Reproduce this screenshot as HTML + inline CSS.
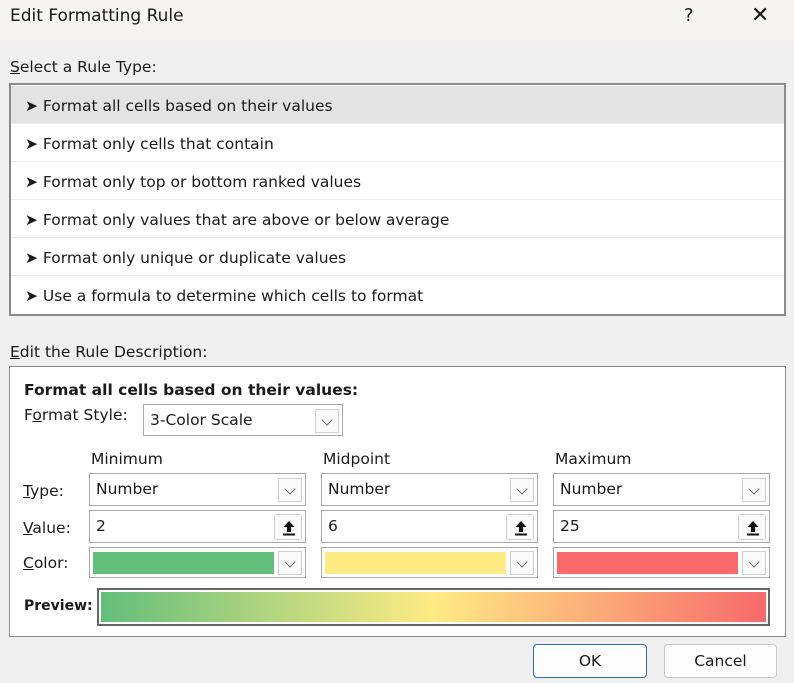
<!DOCTYPE html><html><head><style>
*{box-sizing:border-box;margin:0;padding:0}
body{width:794px;height:683px;background:#f0f0f0;font-family:"Segoe UI","DejaVu Sans","Liberation Sans",sans-serif;font-size:15.5px;color:#1a1a1a;position:relative;overflow:hidden}
.a{position:absolute;white-space:nowrap}
.title{left:0;top:0;width:794px;height:40px;background:#f6f4f1}
.list{left:9px;top:83px;width:777px;height:233px;background:#fff;border:2px solid #8a8a8a}
.row{position:absolute;left:0;width:773px;height:38px;border-bottom:1px solid #ececec;padding-left:14px;line-height:40px}
.desc{left:9px;top:366px;width:777px;height:271px;background:#fff;border:1px solid #8a8a8a}
.box{position:absolute;border:1px solid #a8a8a8;background:#fff;height:33px}
.box span{position:absolute;left:6px;top:6px}
.dd{position:absolute;right:3px;top:4px;width:24px;height:24px;border:1px solid #cfcfcf;background:#fafafa}
.dd:after{content:"";position:absolute;left:7px;top:6px;width:7px;height:7px;border-right:1.3px solid #666;border-bottom:1.3px solid #666;transform:rotate(45deg)}
.up{position:absolute;right:3px;top:3px;width:28px;height:26px;border:1px solid #cfcfcf;border-radius:3px;background:#fafafa}
.up svg{position:absolute;left:7px;top:5px}
.sw{position:absolute;left:3px;top:4px;height:22px}
.btn{position:absolute;height:34px;border:1px solid #c8c8c8;border-radius:4px;background:#fdfdfd;text-align:center;line-height:32px}
u{text-decoration:underline}
</style></head><body>
<div class="a title"></div>
<div class="a" style="left:10px;top:6px;font-size:17px">Edit Formatting Rule</div>
<div class="a" style="left:684px;top:5px;font-size:18px">?</div>
<div class="a" style="left:751px;top:3px;font-size:22px;font-weight:300">✕</div>
<div class="a" style="left:10px;top:58px"><u>S</u>elect a Rule Type:</div>
<div class="a list">
<div class="row" style="top:1px;background:#e3e3e3">➤ Format all cells based on their values</div>
<div class="row" style="top:39px">➤ Format only cells that contain</div>
<div class="row" style="top:77px">➤ Format only top or bottom ranked values</div>
<div class="row" style="top:115px">➤ Format only values that are above or below average</div>
<div class="row" style="top:153px">➤ Format only unique or duplicate values</div>
<div class="row" style="top:191px;border:none">➤ Use a formula to determine which cells to format</div>
</div>
<div class="a" style="left:10px;top:343px"><u>E</u>dit the Rule Description:</div>
<div class="a desc"></div>
<div class="a" style="left:24px;top:381px;font-weight:bold">Format all cells based on their values:</div>
<div class="a" style="left:24px;top:406px">F<u>o</u>rmat Style:</div>
<div class="box" style="left:143px;top:404px;width:200px;height:32px"><span>3-Color Scale</span><div class="dd"></div></div>
<div class="a" style="left:91px;top:450px">Minimum</div>
<div class="a" style="left:323px;top:450px">Midpoint</div>
<div class="a" style="left:555px;top:450px">Maximum</div>
<div class="a" style="left:23px;top:482px"><u>T</u>ype:</div>
<div class="a" style="left:23px;top:519px"><u>V</u>alue:</div>
<div class="a" style="left:23px;top:554px"><u>C</u>olor:</div>
<div class="box" style="left:89px;top:473px;width:217px"><span>Number</span><div class="dd"></div></div>
<div class="box" style="left:321px;top:473px;width:217px"><span>Number</span><div class="dd"></div></div>
<div class="box" style="left:553px;top:473px;width:217px"><span>Number</span><div class="dd"></div></div>
<div class="box" style="left:89px;top:510px;width:217px"><span>2</span><div class="up"><svg width="14" height="16" viewBox="0 0 14 16"><path d="M7 1 L1.5 7 H5 V12 H9 V7 H12.5 Z" fill="#111"/><rect x="1" y="13.5" width="12" height="2" fill="#111"/></svg></div></div>
<div class="box" style="left:321px;top:510px;width:217px"><span>6</span><div class="up"><svg width="14" height="16" viewBox="0 0 14 16"><path d="M7 1 L1.5 7 H5 V12 H9 V7 H12.5 Z" fill="#111"/><rect x="1" y="13.5" width="12" height="2" fill="#111"/></svg></div></div>
<div class="box" style="left:553px;top:510px;width:217px"><span>25</span><div class="up"><svg width="14" height="16" viewBox="0 0 14 16"><path d="M7 1 L1.5 7 H5 V12 H9 V7 H12.5 Z" fill="#111"/><rect x="1" y="13.5" width="12" height="2" fill="#111"/></svg></div></div>
<div class="box" style="left:89px;top:547px;width:217px;height:31px"><div class="sw" style="width:181px;background:#63be7b"></div><div class="dd" style="top:3px"></div></div>
<div class="box" style="left:321px;top:547px;width:217px;height:31px"><div class="sw" style="width:181px;background:#ffeb84"></div><div class="dd" style="top:3px"></div></div>
<div class="box" style="left:553px;top:547px;width:217px;height:31px"><div class="sw" style="width:181px;background:#f8696b"></div><div class="dd" style="top:3px"></div></div>
<div class="a" style="left:24px;top:598px;font-weight:bold;font-size:14px">Preview:</div>
<div class="a" style="left:97px;top:588px;width:673px;height:38px;border:2px solid #666;padding:2px;background:#fff"><div style="width:100%;height:100%;background:linear-gradient(90deg,#63be7b,#ffeb84 50%,#f8696b)"></div></div>
<div class="btn" style="left:533px;top:644px;width:114px;border:1.5px solid #2a6db0">OK</div>
<div class="btn" style="left:664px;top:644px;width:113px">Cancel</div>
</body></html>
